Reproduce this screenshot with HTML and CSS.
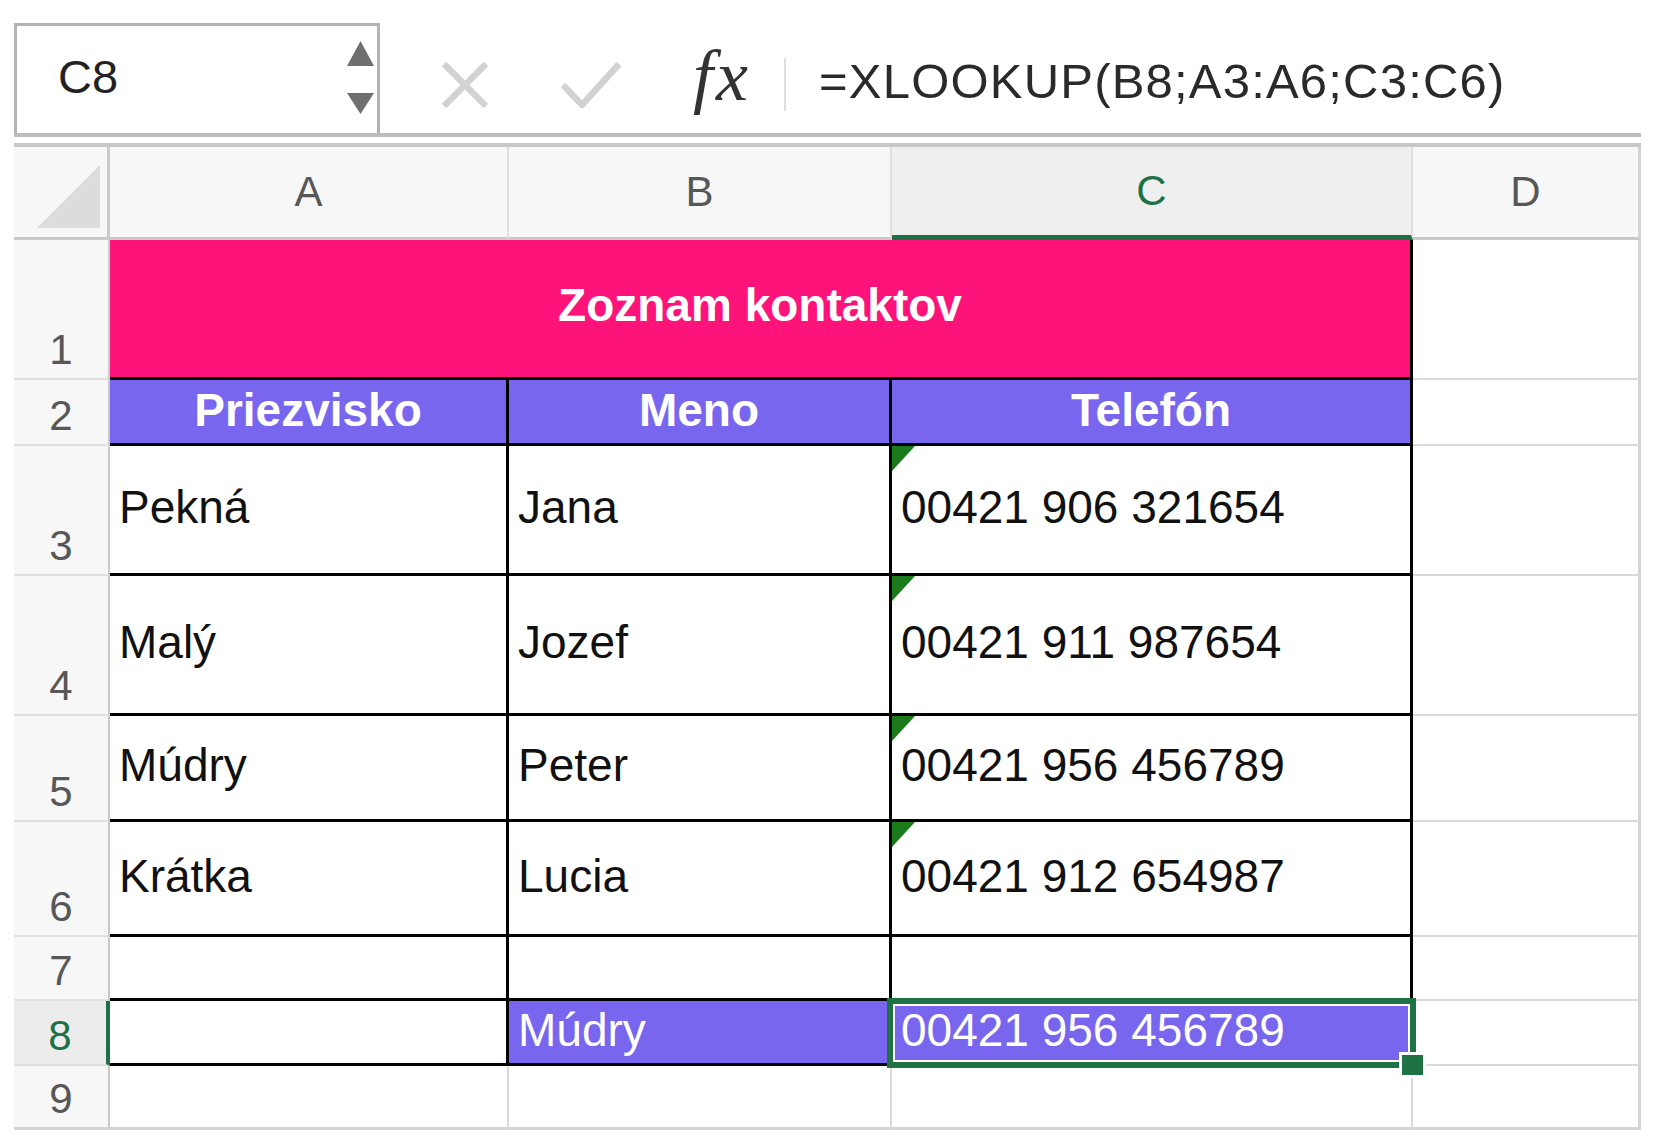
FILE: index.html
```html
<!DOCTYPE html>
<html lang="sk">
<head>
<meta charset="utf-8">
<title>Zoznam kontaktov</title>
<link rel="stylesheet" href="styles.css">
</head>
<body>
<div class="app">
  <div class="fbar">
    <div class="namebox">
      <span class="ref">C8</span>
      <svg class="spin" width="27" height="104" viewBox="0 0 27 104">
        <polygon points="13.5,15 27,40 0,40" fill="#6f6f6f"/>
        <polygon points="0,67 27,67 13.5,88" fill="#6f6f6f"/>
      </svg>
    </div>
    <svg class="icon-x" width="46" height="46" viewBox="0 0 46 46">
      <path d="M2 2 L44 44 M44 2 L2 44" stroke="#d2d2d2" stroke-width="6.5" fill="none"/>
    </svg>
    <svg class="icon-ok" width="60" height="46" viewBox="0 0 60 46">
      <path d="M2 23 L21 43 L58 2" stroke="#d2d2d2" stroke-width="6.5" fill="none"/>
    </svg>
    <span class="fx">fx</span>
    <span class="sep"></span>
    <div class="formula">=XLOOKUP(B8;A3:A6;C3:C6)</div>
  </div>
  <div class="rule"></div>
  <div class="sheet">
    <!-- header row -->
    <div class="corner"><svg width="93" height="90" viewBox="0 0 93 90"><polygon points="86,18 86,81 23,81" fill="#dcdcdc"/></svg></div>
    <div class="ch">A</div>
    <div class="ch">B</div>
    <div class="ch sel">C</div>
    <div class="ch dcol">D</div>

    <!-- row 1 -->
    <div class="rh">1</div>
    <div class="cell title">Zoznam kontaktov</div>
    <div class="cell dcol"></div>

    <!-- row 2 -->
    <div class="rh">2</div>
    <div class="cell b hd">Priezvisko</div>
    <div class="cell b hd">Meno</div>
    <div class="cell b hd">Telefón</div>
    <div class="cell dcol"></div>

    <!-- row 3 -->
    <div class="rh">3</div>
    <div class="cell b">Pekná</div>
    <div class="cell b">Jana</div>
    <div class="cell b num"><span class="flag"></span>00421 906 321654</div>
    <div class="cell dcol"></div>

    <!-- row 4 -->
    <div class="rh">4</div>
    <div class="cell b">Malý</div>
    <div class="cell b">Jozef</div>
    <div class="cell b num"><span class="flag"></span>00421 911 987654</div>
    <div class="cell dcol"></div>

    <!-- row 5 -->
    <div class="rh">5</div>
    <div class="cell b">Múdry</div>
    <div class="cell b">Peter</div>
    <div class="cell b num"><span class="flag"></span>00421 956 456789</div>
    <div class="cell dcol"></div>

    <!-- row 6 -->
    <div class="rh">6</div>
    <div class="cell b">Krátka</div>
    <div class="cell b">Lucia</div>
    <div class="cell b num"><span class="flag"></span>00421 912 654987</div>
    <div class="cell dcol"></div>

    <!-- row 7 -->
    <div class="rh">7</div>
    <div class="cell b"></div>
    <div class="cell b"></div>
    <div class="cell b"></div>
    <div class="cell dcol"></div>

    <!-- row 8 -->
    <div class="rh sel">8</div>
    <div class="cell b"></div>
    <div class="cell b pv">Múdry</div>
    <div class="cell b pv active">00421 956 456789<span class="selbox"></span><span class="handle"></span></div>
    <div class="cell dcol"></div>

    <!-- row 9 -->
    <div class="rh last">9</div>
    <div class="cell last"></div>
    <div class="cell last"></div>
    <div class="cell last"></div>
    <div class="cell dcol last"></div>
  </div>
</div>
</body>
</html>
```

FILE: styles.css
```css
html, body {
  margin: 0;
  padding: 0;
  background: #ffffff;
}

.app {
  width: 1653px;
  height: 1141px;
  overflow: hidden;
  font-family: "Liberation Sans", Arial, sans-serif;
  color: #111;
}

/* ---------- formula bar ---------- */
.fbar {
  display: flex;
  align-items: flex-start;
  height: 133px;
  padding-left: 14px;
  box-sizing: border-box;
}

.namebox {
  box-sizing: border-box;
  width: 366px;
  height: 110px;
  margin-top: 23px;
  border: 3px solid #b4b4b4;
  border-bottom: none;
  display: flex;
  align-items: flex-start;
  justify-content: space-between;
  padding-left: 41px;
  padding-right: 3px;
}

.ref {
  font-size: 47px;
  line-height: 56px;
  margin-top: 23px;
  color: #222;
}

.spin {
  display: block;
}

.icon-x {
  display: block;
  margin-left: 62px;
  margin-top: 62px;
}

.icon-ok {
  display: block;
  margin-left: 73px;
  margin-top: 62px;
}

.fx {
  display: block;
  width: 66px;
  margin-left: 72px;
  margin-top: 40px;
  font-family: "Liberation Serif", "Times New Roman", serif;
  font-style: italic;
  font-size: 72px;
  line-height: 72px;
  height: 72px;
  letter-spacing: 3px;
  color: #333;
  white-space: nowrap;
}

.sep {
  display: block;
  width: 2px;
  height: 53px;
  margin-left: 25px;
  margin-top: 58px;
  background: #dedede;
}

.formula {
  margin-left: 33px;
  margin-top: 53px;
  font-size: 49px;
  line-height: 56px;
  letter-spacing: 1.2px;
  color: #2a2a2a;
  white-space: nowrap;
}

.rule {
  margin-left: 14px;
  width: 1627px;
  height: 14px;
  box-sizing: border-box;
  border-top: 4px solid #bdbdbd;
  border-bottom: 4px solid #c8c8c8;
}

/* ---------- sheet grid ---------- */
.sheet {
  margin-left: 14px;
  display: grid;
  grid-template-columns: 96px 399px 383px 521px 228px;
  grid-template-rows: 93px 140px 66px 130px 140px 106px 115px 64px 65px 64px;
}

.sheet > div {
  box-sizing: border-box;
  border-right: 2px solid #dadada;
  border-bottom: 2px solid #dadada;
}

.corner {
  background: #f7f7f7;
  border-right: 3px solid #c9c9c9 !important;
  border-bottom: 3px solid #c9c9c9 !important;
}

.corner svg {
  display: block;
}

.ch {
  background: #f7f7f7;
  border-right: 2px solid #e0e0e0 !important;
  border-bottom: 3px solid #c9c9c9 !important;
  display: flex;
  align-items: center;
  justify-content: center;
  font-size: 42px;
  color: #575757;
}

.ch.sel {
  background: #efefef;
  color: #1e7145;
  border-bottom: 5px solid #1e7145 !important;
}

.ch.dcol {
  border-right: 3px solid #d4d4d4 !important;
}

.rh {
  background: #f7f7f7;
  border-right: 2px solid #c9c9c9 !important;
  border-bottom: 2px solid #e0e0e0 !important;
  display: flex;
  flex-direction: column;
  justify-content: flex-end;
  align-items: center;
  padding-bottom: 4px;
  font-size: 42px;
  line-height: 48px;
  color: #575757;
}

.rh.sel {
  background: #ececec;
  color: #1e7145;
  border-right: 4px solid #1e7145 !important;
}

.rh.last {
  border-bottom: 3px solid #d4d4d4 !important;
}

.cell {
  display: flex;
  align-items: center;
  padding-left: 9px;
  padding-bottom: 5px;
  font-size: 46px;
  line-height: 54px;
  white-space: nowrap;
  position: relative;
}

.cell.dcol {
  border-right: 3px solid #d4d4d4;
}

.cell.last {
  border-bottom: 3px solid #d4d4d4;
}

.cell.b {
  border-right: 3px solid #000;
  border-bottom: 3px solid #000;
}

.title {
  grid-column: span 3;
  background: #fe137a;
  border-right: 3px solid #000 !important;
  border-bottom: 3px solid #000 !important;
  justify-content: center;
  padding-left: 0;
  padding-bottom: 8px;
  color: #fff;
  font-weight: bold;
}

.hd {
  background: #7866ef;
  color: #fff;
  font-weight: bold;
  justify-content: center;
  padding-left: 0;
  padding-bottom: 4px;
}

.pv {
  background: #7866ef;
  color: #fff;
}

.flag {
  position: absolute;
  left: 0;
  top: 0;
  width: 0;
  height: 0;
  border-top: 25px solid #1b7b1b;
  border-right: 23px solid transparent;
}

.selbox {
  position: absolute;
  left: -5px;
  top: -3px;
  width: 529px;
  height: 70px;
  box-sizing: border-box;
  border: 6px solid #1f7244;
  box-shadow: inset 0 0 0 2px #ffffff;
  z-index: 2;
}

.handle {
  position: absolute;
  left: 510px;
  top: 54px;
  width: 21px;
  height: 20px;
  background: #1f7244;
  box-shadow: 0 0 0 3px #ffffff;
  z-index: 3;
}
```
